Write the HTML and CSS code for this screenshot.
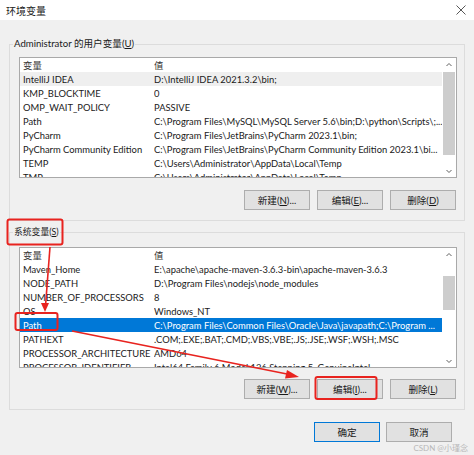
FILE: index.html
```html
<!DOCTYPE html>
<html lang="zh-CN">
<head>
    <meta charset="UTF-8">
    <meta name="viewport" content="width=device-width, initial-scale=1.0">
    <title>环境变量</title>
    <link rel="stylesheet" href="styles.css">
</head>
<body>
    <div class="window">
        <div class="titlebar">
            <span class="title">环境变量</span>
            <svg class="close" width="10" height="10" viewBox="0 0 10 10">
                <path d="M0.5 0.5 L9.5 9.5 M9.5 0.5 L0.5 9.5" stroke="#444" stroke-width="0.9" fill="none"/>
            </svg>
        </div>

        <div class="content">
            <!-- 用户变量 -->
            <fieldset class="group user">
                <legend>Administrator 的用户变量(<u>U</u>)</legend>
                <div class="list">
                    <div class="rows">
                        <div class="row head"><span class="name">变量</span><span class="value">值</span></div>
                        <div class="row hover"><span class="name">IntelliJ IDEA</span><span class="value">D:\IntelliJ IDEA 2021.3.2\bin;</span></div>
                        <div class="row"><span class="name">KMP_BLOCKTIME</span><span class="value">0</span></div>
                        <div class="row"><span class="name">OMP_WAIT_POLICY</span><span class="value">PASSIVE</span></div>
                        <div class="row"><span class="name">Path</span><span class="value">C:\Program Files\MySQL\MySQL Server 5.6\bin;D:\python\Scripts\;...</span></div>
                        <div class="row"><span class="name">PyCharm</span><span class="value">C:\Program Files\JetBrains\PyCharm 2023.1\bin;</span></div>
                        <div class="row"><span class="name">PyCharm Community Edition</span><span class="value">C:\Program Files\JetBrains\PyCharm Community Edition 2023.1\bi...</span></div>
                        <div class="row"><span class="name">TEMP</span><span class="value">C:\Users\Administrator\AppData\Local\Temp</span></div>
                        <div class="row"><span class="name">TMP</span><span class="value">C:\Users\Administrator\AppData\Local\Temp</span></div>
                    </div>
                    <div class="scrollbar">
                        <svg class="arrow" width="14" height="14" viewBox="0 0 14 14"><path d="M4.5 8 L7 5.5 L9.5 8" stroke="#606060" fill="none"/></svg>
                        <div class="track"><div class="thumb thumb-user"></div></div>
                        <svg class="arrow" width="14" height="12" viewBox="0 0 14 12"><path d="M4.5 5 L7 7.5 L9.5 5" stroke="#606060" fill="none"/></svg>
                    </div>
                </div>
                <div class="buttons">
                    <button>新建(<u>N</u>)...</button>
                    <button>编辑(<u>E</u>)...</button>
                    <button>删除(<u>D</u>)</button>
                </div>
            </fieldset>

            <!-- 系统变量 -->
            <fieldset class="group sys">
                <legend>系统变量(<u>S</u>)</legend>
                <div class="list">
                    <div class="rows">
                        <div class="row head"><span class="name">变量</span><span class="value">值</span></div>
                        <div class="row"><span class="name">Maven_Home</span><span class="value">E:\apache\apache-maven-3.6.3-bin\apache-maven-3.6.3</span></div>
                        <div class="row"><span class="name">NODE_PATH</span><span class="value">D:\Program Files\nodejs\node_modules</span></div>
                        <div class="row"><span class="name">NUMBER_OF_PROCESSORS</span><span class="value">8</span></div>
                        <div class="row"><span class="name">OS</span><span class="value">Windows_NT</span></div>
                        <div class="row selected"><span class="name">Path</span><span class="value">C:\Program Files\Common Files\Oracle\Java\javapath;C:\Program ...</span></div>
                        <div class="row"><span class="name">PATHEXT</span><span class="value">.COM;.EXE;.BAT;.CMD;.VBS;.VBE;.JS;.JSE;.WSF;.WSH;.MSC</span></div>
                        <div class="row"><span class="name">PROCESSOR_ARCHITECTURE</span><span class="value">AMD64</span></div>
                        <div class="row"><span class="name">PROCESSOR_IDENTIFIER</span><span class="value">Intel64 Family 6 Model 126 Stepping 5, GenuineIntel</span></div>
                    </div>
                    <div class="scrollbar">
                        <svg class="arrow" width="14" height="14" viewBox="0 0 14 14"><path d="M4.5 8 L7 5.5 L9.5 8" stroke="#606060" fill="none"/></svg>
                        <div class="track"><div class="thumb thumb-sys"></div></div>
                        <svg class="arrow" width="14" height="12" viewBox="0 0 14 12"><path d="M4.5 5 L7 7.5 L9.5 5" stroke="#606060" fill="none"/></svg>
                    </div>
                </div>
                <div class="buttons">
                    <button>新建(<u>W</u>)...</button>
                    <button>编辑(<u>I</u>)...</button>
                    <button>删除(<u>L</u>)</button>
                </div>
            </fieldset>

            <div class="dialog-buttons">
                <button class="default">确定</button>
                <button>取消</button>
            </div>
        </div>

        <div class="watermark">CSDN @小瑾念</div>

        <!-- 红色标注 -->
        <svg class="marks" width="474" height="455" viewBox="0 0 474 455">
            <rect x="7.5" y="219.5" width="55" height="25" rx="2" fill="none" stroke="#e8231f" stroke-width="2"/>
            <rect x="15.5" y="313" width="42" height="17" rx="2" fill="none" stroke="#e8231f" stroke-width="2"/>
            <rect x="315.5" y="377" width="61" height="22" rx="2" fill="none" stroke="#e8231f" stroke-width="2"/>
            <line x1="50" y1="247" x2="45.5" y2="306" stroke="#e8231f" stroke-width="1.6"/>
            <path d="M41 303 L45 312 L49 303 Z" fill="#e8231f"/>
            <line x1="72" y1="331" x2="292" y2="375" stroke="#e8231f" stroke-width="1.6"/>
            <path d="M287 370 L299 377 L285 378.5 Z" fill="#e8231f"/>
        </svg>
    </div>
</body>
</html>
```

FILE: styles.css
```css
* {
    box-sizing: border-box;
}

body {
    margin: 0;
    font-family: Lato, "Noto Sans CJK SC", sans-serif;
    font-size: 9.4px;
    color: #1a1a1a;
}

.window {
    position: relative;
    width: 474px;
    height: 455px;
    background: #f0f0f0;
    overflow: hidden;
}

.titlebar {
    height: 20px;
    background: #fff;
    display: flex;
    align-items: center;
    justify-content: space-between;
    padding: 0 8px 0 6px;
}

.title {
    font-size: 10px;
    color: #222;
}

.content {
    padding-top: 17px;
}

/* 分组框 */
.group {
    margin: 0 9px;
    padding: 6px 7px 10px 9px;
    border: 1px solid #dcdcdc;
    min-width: 0;
}

.group legend {
    padding: 0 1px;
    margin-left: -6px;
    line-height: 14px;
    font-size: 9.6px;
    color: #1a1a1a;
}

.group.sys {
    margin-top: 4px;
    padding-top: 8px;
    padding-bottom: 10px;
}

.group.sys legend {
    font-size: 8.8px;
}

u {
    text-decoration: underline;
    text-underline-offset: 1px;
}

/* 列表 */
.list {
    display: flex;
    height: 121px;
    background: #fff;
    border: 1px solid #a9a9a9;
}

.rows {
    flex: 1;
    min-width: 0;
    overflow: hidden;
}

.row {
    display: flex;
    height: 14px;
    padding-top: 2px;
    line-height: 12px;
    white-space: nowrap;
}

.row .name {
    width: 134px;
    flex: none;
    padding-left: 3px;
    overflow: hidden;
}

.row .value {
    flex: 1;
    min-width: 0;
    overflow: hidden;
}

.row.head {
    color: #333;
}

.row.hover {
    background: #efefef;
}

.row.selected {
    background: #0078d7;
    color: #fff;
}

.scrollbar {
    width: 14px;
    flex: none;
    display: flex;
    flex-direction: column;
    background: #fff;
}

.arrow {
    display: block;
    flex: none;
}

.track {
    flex: 1;
    position: relative;
}

.thumb {
    position: absolute;
    left: 1px;
    right: 1px;
    background: #cdcdcd;
}

.thumb-user {
    top: 0;
    height: 83px;
}

.thumb-sys {
    top: 14px;
    height: 34px;
}

/* 按钮 */
.buttons {
    display: flex;
    justify-content: flex-end;
    gap: 7px;
    margin-top: 12px;
    padding-right: 1px;
}

.group.sys .buttons {
    margin-top: 11px;
}

button {
    width: 66px;
    height: 20px;
    padding: 0;
    font-family: inherit;
    font-size: 9.6px;
    color: #1a1a1a;
    background: #e1e1e1;
    border: 1px solid #adadad;
}

button.default {
    border-color: #0078d7;
}

.dialog-buttons {
    display: flex;
    justify-content: flex-end;
    gap: 6px;
    margin-top: 12px;
    padding-right: 22px;
}

.watermark {
    position: absolute;
    right: 6px;
    bottom: 2px;
    font-size: 8px;
    color: #b8b8b8;
}

.marks {
    position: absolute;
    left: 0;
    top: 0;
    pointer-events: none;
}
```
